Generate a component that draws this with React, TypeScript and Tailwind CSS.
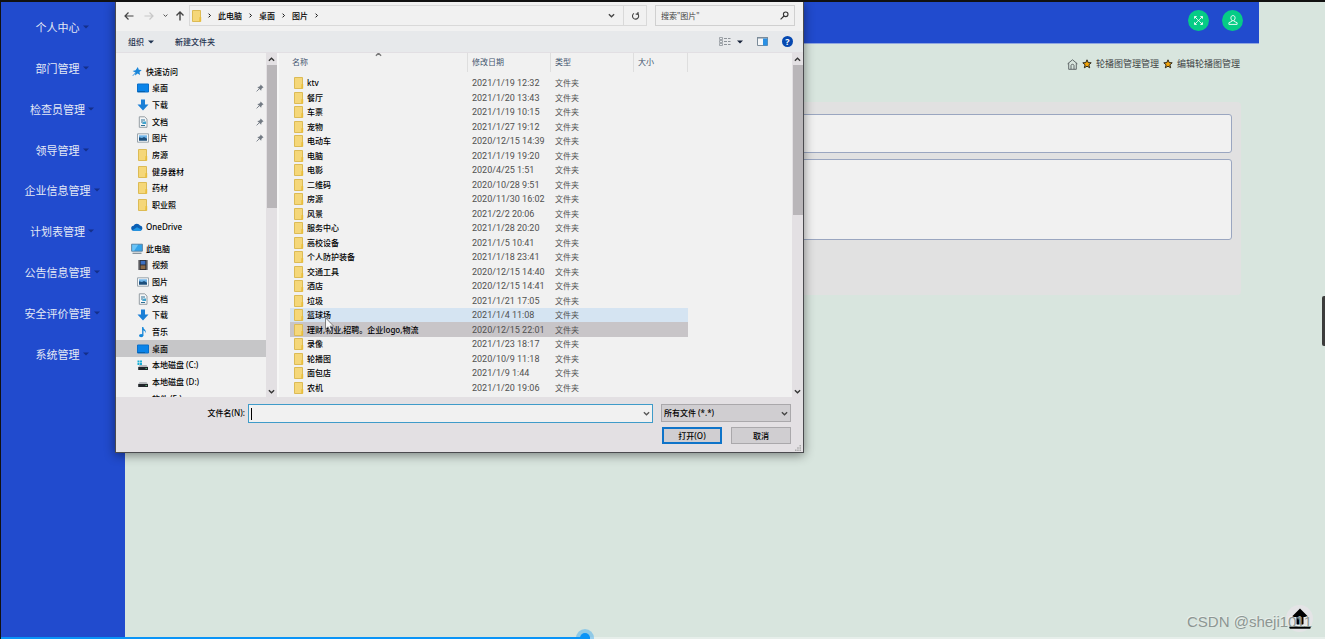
import type { ReactNode } from "react";

const menuItems = [
  "个人中心",
  "部门管理",
  "检查员管理",
  "领导管理",
  "企业信息管理",
  "计划表管理",
  "公告信息管理",
  "安全评价管理",
  "系统管理",
];

type FileRow = { name: string; date: string; state?: "hover" | "selected" };

const files: FileRow[] = [
  { name: "ktv", date: "2021/1/19 12:32" },
  { name: "餐厅", date: "2021/1/20 13:43" },
  { name: "车票", date: "2021/1/19 10:15" },
  { name: "宠物", date: "2021/1/27 19:12" },
  { name: "电动车", date: "2020/12/15 14:39" },
  { name: "电脑", date: "2021/1/19 19:20" },
  { name: "电影", date: "2020/4/25 1:51" },
  { name: "二维码", date: "2020/10/28 9:51" },
  { name: "房源", date: "2020/11/30 16:02" },
  { name: "风景", date: "2021/2/2 20:06" },
  { name: "服务中心", date: "2021/1/28 20:20" },
  { name: "高校设备", date: "2021/1/5 10:41" },
  { name: "个人防护装备", date: "2021/1/18 23:41" },
  { name: "交通工具", date: "2020/12/15 14:40" },
  { name: "酒店", date: "2020/12/15 14:41" },
  { name: "垃圾", date: "2021/1/21 17:05" },
  { name: "篮球场", date: "2021/1/4 11:08", state: "hover" },
  { name: "理财,物业,招聘。企业logo,物流", date: "2020/12/15 22:01", state: "selected" },
  { name: "录像", date: "2021/1/23 18:17" },
  { name: "轮播图", date: "2020/10/9 11:18" },
  { name: "面包店", date: "2021/1/9 1:44" },
  { name: "农机", date: "2021/1/20 19:06" },
];

const rowState = {
  hover: "bg-[#d5e4f2]",
  selected: "bg-[#c8c5c8]",
};

function FolderIcon() {
  return (
    <svg className="h-3 w-[10px] shrink-0" viewBox="0 0 10 12" aria-hidden="true">
      <path d="M.5.5h8v11h-8z" fill="#f5d779" stroke="#dcbb55" />
      <path d="M7.5 7h1.7v4.6H7.2z" fill="#e8bd3a" />
    </svg>
  );
}

function DesktopIcon() {
  return (
    <svg className="h-[10px] w-3 shrink-0" viewBox="0 0 12 10" aria-hidden="true">
      <path d="M.5 1h11v8H.5z" fill="#0a84ea" stroke="#0a6fc8" />
      <path d="M1 8.5h7" stroke="#065a9f" strokeWidth=".8" />
    </svg>
  );
}

function DownloadIcon() {
  return (
    <svg className="h-3 w-3 shrink-0" viewBox="0 0 12 12" aria-hidden="true">
      <path d="M4 .5h4v5h3.500L6 11.500.5 5.500H4z" fill="#1a7fd6" />
    </svg>
  );
}

function DocumentIcon() {
  return (
    <svg className="h-3 w-3 shrink-0" viewBox="0 0 12 12" aria-hidden="true">
      <path d="M2.3.8h5.4l2.3 2.3v8.2H2.3z" fill="#f4f6f7" stroke="#8a949b" strokeWidth=".9" />
      <path d="M4 4h4M4 6h2M4 9.5h4" stroke="#2f6f94" />
      <path d="M6.5 5.5H9V8H5z" fill="#3fa4cf" />
    </svg>
  );
}

function PictureIcon() {
  return (
    <svg className="h-[10px] w-3 shrink-0" viewBox="0 0 12 10" aria-hidden="true">
      <path d="M.5.8h11v8.4H.5z" fill="#f5f8fa" stroke="#9aa5ad" />
      <path d="M2 2.3h8v3.2H2z" fill="#6fb4e8" />
      <path d="M2 4.300l3 .6 2-.8 3 1.400v2.300H2z" fill="#1d4f7c" />
    </svg>
  );
}

function VideoIcon() {
  return (
    <svg className="h-3 w-3 shrink-0" viewBox="0 0 12 12" aria-hidden="true">
      <path d="M1.5 1h9v10h-9z" fill="#2a2a30" />
      <path d="M3.6 1.8h4.8v3.7H3.6z" fill="#3c6fc0" />
      <path d="M3.6 6.4h4.8v3.7H3.6z" fill="#8c6a46" />
      <path d="M2.5 1.5v9M9.5 1.5v9" stroke="#a7a7a7" strokeWidth=".8" strokeDasharray="1 1" />
    </svg>
  );
}

function MusicIcon() {
  return (
    <svg className="h-3 w-3 shrink-0" viewBox="0 0 12 12" aria-hidden="true">
      <path d="M5.8 1v8.3" stroke="#1486d8" strokeWidth="1.3" />
      <ellipse cx="4.2" cy="9.6" rx="2.2" ry="1.7" fill="#1486d8" />
      <path d="M5.4.8c.6 2.3 4.3 2.7 3.2 6.4-.3-1.8-1.4-2.7-3.2-3.2z" fill="#1486d8" />
    </svg>
  );
}

function DriveIcon({ system = false }: { system?: boolean }) {
  return (
    <svg className="h-3 w-3 shrink-0" viewBox="0 0 12 12" aria-hidden="true">
      {system && <path d="M.5 1.5h2v2h-2zM3 1.5h2v2H3zM.5 4h2v2h-2zM3 4h2v2H3z" fill="#18b0d6" />}
      <path d="M2.5 6h7L11 8.3H1.2z" fill="#b4b8bb" />
      <path d="M1.2 8h9.8v3H1.2z" fill="#22262a" />
      <path d="M8.5 9.5h1.4" stroke="#6be08a" strokeWidth=".8" />
    </svg>
  );
}

function StarPinIcon() {
  return (
    <svg className="h-[11px] w-[10px] shrink-0" viewBox="0 0 10 11" aria-hidden="true">
      <path d="M5.8 1l1 2.7 2.9.3-2.2 2 .6 3-2.5-1.4L3 9.6l.4-3L.6 5l3-.8z" fill="#1a86d9" />
      <path d="M3.4 7L.8 9.8" stroke="#1a86d9" strokeWidth=".9" />
    </svg>
  );
}

function CloudIcon() {
  return (
    <svg className="h-[10px] w-3 shrink-0" viewBox="0 0 12 10" aria-hidden="true">
      <path d="M2.8 8.8a2.5 2.5 0 01-.2-5A3.6 3.6 0 019 3.5a2.7 2.7 0 01.4 5.3z" fill="#0b5fb4" />
      <path d="M1.4 8.2L6 5.2l4.8 2.6c-.4.7-.9 1-1.6 1H2.8c-.6 0-1-.2-1.4-.6z" fill="#1e96e6" />
    </svg>
  );
}

function ComputerIcon() {
  return (
    <svg className="h-3 w-3 shrink-0" viewBox="0 0 12 12" aria-hidden="true">
      <path d="M.6 1.2h10.8v7H.6z" fill="#33a3ea" stroke="#5a7f9b" strokeWidth=".9" />
      <path d="M1.2 1.8h6l-4 6h-2z" fill="#6cc4f6" />
      <path d="M1.5 10.3h9" stroke="#7d8b95" strokeWidth="1.2" />
    </svg>
  );
}

function PushPin() {
  return (
    <svg className="h-2 w-2" viewBox="0 0 8 8" aria-hidden="true">
      <path d="M4.6.4l3 3-1 .3-1.200 1.300-.2 1.800L1.300 2.900l1.800-.2 1.300-1.200z" fill="#737b84" />
      <path d="M3.2 4.8L.6 7.4" stroke="#737b84" strokeWidth=".9" />
    </svg>
  );
}

function Chevron({ dir, className }: { dir: "up" | "down" | "right"; className: string }) {
  const d = { up: "M1 5.5l3-3 3 3", down: "M1 2.5l3 3 3-3", right: "M2.5 1l3 3-3 3" }[dir];
  return (
    <svg className={className} viewBox="0 0 8 8" fill="none" stroke="currentColor" strokeWidth="1.5" aria-hidden="true">
      <path d={d} />
    </svg>
  );
}

function Caret({ className }: { className: string }) {
  return (
    <svg className={className} viewBox="0 0 6 4" aria-hidden="true">
      <path d="M0 .5h6L3 3.5z" fill="currentColor" />
    </svg>
  );
}

type TreeNode = { label: string; icon: ReactNode; pinned?: boolean; active?: boolean };

const quickAccess: TreeNode[] = [
  { label: "桌面", icon: <DesktopIcon />, pinned: true },
  { label: "下载", icon: <DownloadIcon />, pinned: true },
  { label: "文档", icon: <DocumentIcon />, pinned: true },
  { label: "图片", icon: <PictureIcon />, pinned: true },
  { label: "房源", icon: <FolderIcon /> },
  { label: "健身器材", icon: <FolderIcon /> },
  { label: "药材", icon: <FolderIcon /> },
  { label: "职业照", icon: <FolderIcon /> },
];

const thisPc: TreeNode[] = [
  { label: "视频", icon: <VideoIcon /> },
  { label: "图片", icon: <PictureIcon /> },
  { label: "文档", icon: <DocumentIcon /> },
  { label: "下载", icon: <DownloadIcon /> },
  { label: "音乐", icon: <MusicIcon /> },
  { label: "桌面", icon: <DesktopIcon />, active: true },
  { label: "本地磁盘 (C:)", icon: <DriveIcon system /> },
  { label: "本地磁盘 (D:)", icon: <DriveIcon /> },
  { label: "软件 (E:)", icon: null },
];

function TreeGroup({ label, icon, nodes = [] }: { label: string; icon: ReactNode; nodes?: TreeNode[] }) {
  return (
    <section>
      <div className="flex h-[17px] items-center gap-[3px] pl-[15px]">
        <span className="flex w-3 justify-center">{icon}</span>
        {label}
      </div>
      <ul>
        {nodes.map((n) => (
          <li
            key={n.label}
            className={
              "flex h-[17px] items-center gap-[3px] pr-[2px] pl-[21px] nth-[3n+1]:h-4 " +
              (n.active ? "bg-[#c6c6c8]" : "")
            }
          >
            <span className="flex w-3 justify-center">{n.icon}</span>
            <span className="flex-1">{n.label}</span>
            {n.pinned && <PushPin />}
          </li>
        ))}
      </ul>
    </section>
  );
}

function ScrollBar({ thumb }: { thumb: string }) {
  return (
    <div className="flex w-[11px] shrink-0 flex-col items-center bg-[#e3e0e3] text-[#333]">
      <span className="flex h-3 items-center">
        <Chevron dir="up" className="h-[7px] w-[7px]" />
      </span>
      <span className={"w-[10px] bg-[#b9b6b9] " + thumb} />
      <span className="mt-auto flex h-3 items-center">
        <Chevron dir="down" className="h-[7px] w-[7px]" />
      </span>
    </div>
  );
}

function AddressRow() {
  return (
    <div className="flex h-[29px] items-center bg-[#f1f1f1] px-2 pb-[2px]">
      <div className="flex w-[65px] items-center text-[#444]">
        <button aria-label="后退" className="w-5">
          <svg className="h-[10px] w-[10px]" viewBox="0 0 10 10" fill="none" stroke="currentColor" strokeWidth="1.2">
            <path d="M9.5 5H1M4.5 1.5L1 5l3.5 3.5" />
          </svg>
        </button>
        <button aria-label="前进" className="w-4 text-[#c8c8c8]">
          <svg className="h-[10px] w-[10px]" viewBox="0 0 10 10" fill="none" stroke="currentColor" strokeWidth="1.2">
            <path d="M.5 5H9M5.5 1.5L9 5 5.5 8.5" />
          </svg>
        </button>
        <button aria-label="最近位置" className="w-[15px]">
          <Chevron dir="down" className="ml-[3px] h-[5px] w-[5px]" />
        </button>
        <button aria-label="上移">
          <svg className="h-[10px] w-[10px]" viewBox="0 0 10 10" fill="none" stroke="currentColor" strokeWidth="1.4">
            <path d="M5 9.5V1M1.5 4.5L5 1l3.5 3.5" />
          </svg>
        </button>
      </div>
      <div className="flex h-[21px] flex-1 items-center border border-[#d9d9d9] font-medium text-black">
        <nav aria-label="路径" className="flex flex-1 items-center gap-[6px] pl-[2px]">
          <FolderIcon />
          <Chevron dir="right" className="-ml-px h-[5px] w-[5px]" />
          <a href="#pc">此电脑</a>
          <Chevron dir="right" className="h-[5px] w-[5px]" />
          <a href="#desktop">桌面</a>
          <Chevron dir="right" className="h-[5px] w-[5px]" />
          <a href="#pictures">图片</a>
          <Chevron dir="right" className="h-[5px] w-[5px]" />
        </nav>
        <button aria-label="展开" className="px-2 text-[#444]">
          <Chevron dir="down" className="h-[7px] w-[7px]" />
        </button>
        <button aria-label="刷新" className="flex h-full w-[23px] items-center justify-center border-l border-[#d9d9d9] text-[#444]">
          <svg className="h-[9px] w-[9px]" viewBox="0 0 9 9" fill="none" stroke="currentColor" strokeWidth="1.1">
            <path d="M6.300 2.500A3.100 3.100 0 113 2.400" />
            <path d="M2 .9v2.200h2.300" transform="translate(9 0) scale(-1 1)" />
          </svg>
        </button>
      </div>
      <div className="ml-2 flex h-[21px] w-[140px] items-center border border-[#d0d0d0] px-[5px]">
        <input
          aria-label="搜索"
          placeholder={'搜索"图片"'}
          className="min-w-0 flex-1 bg-transparent outline-none placeholder:text-[#444]"
        />
        <svg className="h-[9px] w-[9px] text-[#333]" viewBox="0 0 9 9" fill="none" stroke="currentColor" strokeWidth="1.1" aria-hidden="true">
          <circle cx="5.7" cy="3.3" r="2.3" />
          <path d="M4 5L.6 8.4" />
        </svg>
      </div>
    </div>
  );
}

function ToolRow() {
  return (
    <div className="flex h-[22px] items-center border-b border-[#e2dfe3] bg-[#e7e9eb] pr-[10px] pl-3 text-[#1f3350]">
      <button className="flex items-center gap-1 font-medium">
        组织
        <Caret className="h-1 w-[6px]" />
      </button>
      <button className="ml-[21px] flex-1 text-left font-medium">新建文件夹</button>
      <button aria-label="更改视图" className="flex items-center gap-[6px] text-[#16223a]">
        <svg className="h-[9px] w-3" viewBox="0 0 12 9" fill="none" stroke="#8d9399">
          <path d="M.5.5h3v2h-3zM.5 3.5h3v2h-3zM.5 6.5h3v2h-3z" strokeWidth=".8" />
          <path d="M5 1.5h3M9 1.5h2.5M5 4.5h3M9 4.5h2.5M5 7.5h3M9 7.5h2.5" />
        </svg>
        <Caret className="h-1 w-[6px]" />
      </button>
      <button aria-label="预览窗格" className="ml-[14px]">
        <svg className="h-[9px] w-[11px]" viewBox="0 0 11 9">
          <path d="M.5.5h10v8H.5z" fill="#f4f6f8" stroke="#7b8b99" />
          <path d="M0 0h11v1.500H0z" fill="#7b8b99" />
          <path d="M6 1.500h4.500v7H6z" fill="#2a90e4" />
        </svg>
      </button>
      <button aria-label="帮助" className="ml-[14px] flex h-[11px] w-[11px] items-center justify-center rounded-full bg-[#0648b0] text-[9px] leading-[11px] font-bold text-white">
        ?
      </button>
    </div>
  );
}

function FileTable() {
  return (
    <div className="relative flex-1 overflow-hidden pl-[11px]">
      <Chevron dir="up" className="absolute top-[-2px] left-[96px] h-[7px] w-[7px] text-[#777]" />
      <table className="w-[398px] table-fixed border-collapse">
        <colgroup>
          <col className="w-[178px]" />
          <col className="w-[83px]" />
          <col className="w-[83px]" />
          <col />
        </colgroup>
        <thead>
          <tr className="h-[23px] text-left align-top text-[#43566f]">
            {["名称", "修改日期", "类型", "大小"].map((h, i) => (
              <th key={h} className="p-0 font-normal">
                <div className={"h-[19px] border-r border-[#dedede] leading-[18px] " + (i === 0 ? "pl-[2px]" : "pl-1")}>{h}</div>
              </th>
            ))}
          </tr>
        </thead>
        <tbody>
          {files.map((f) => (
            <tr key={f.name} className={"h-[14px] even:h-[15px] " + (f.state ? rowState[f.state] : "")}>
              <td className="p-0">
                <div className="flex h-[14px] items-center gap-[3px] pl-1 font-medium whitespace-nowrap text-black">
                  <FolderIcon />
                  {f.name}
                </div>
              </td>
              <td className="p-0 pl-1 font-[Roboto,sans-serif] text-[9px] leading-[14px] whitespace-nowrap text-[#505050]">{f.date}</td>
              <td className="p-0 pl-1 leading-[14px] text-[#505050]">文件夹</td>
              <td className="p-0" />
            </tr>
          ))}
          <tr className="h-[15px]">
            <td className="p-0 pl-1" colSpan={4}>
              <FolderIcon />
            </td>
          </tr>
        </tbody>
      </table>
    </div>
  );
}

function DialogFooter() {
  return (
    <div className="flex flex-col gap-1 bg-[#e3e0e3] pt-[7px] pr-3 pb-2 text-black">
      <div className="flex items-start">
        <label htmlFor="file-name" className="w-[129px] text-right leading-[18px] font-medium">
          文件名(N):
        </label>
        <div className="ml-[3px] flex h-[19px] flex-1 items-center border border-[#3f9bc9] bg-[#f1f1f1] pr-[2px] pl-[2px]">
          <span className="h-3 w-px bg-black" />
          <input id="file-name" className="h-full min-w-0 flex-1 bg-transparent outline-none" />
          <Chevron dir="down" className="h-[7px] w-[7px] text-[#555]" />
        </div>
        <div className="relative ml-2 w-[130px]">
          <select aria-label="文件类型" className="block h-[18px] w-full appearance-none border border-[#aaa8ab] bg-[#d0ced1] pl-[2px] font-medium">
            <option>所有文件 (*.*)</option>
          </select>
          <Chevron dir="down" className="pointer-events-none absolute top-[6px] right-[3px] h-[7px] w-[7px] text-[#444]" />
        </div>
      </div>
      <div className="flex justify-end gap-[9px]">
        <button className="h-[17px] w-[60px] border-2 border-[#0f74c9] bg-[#d0ced1] leading-3 font-medium">打开(O)</button>
        <button className="h-[17px] w-[60px] border border-[#aaa8ab] bg-[#d0ced1] leading-3 font-medium">取消</button>
      </div>
      <svg className="absolute right-[2px] bottom-[1px] h-[6px] w-[6px]" viewBox="0 0 6 6" fill="#aaa" aria-hidden="true">
        <path d="M4.5 0H6v1.5H4.5zM4.5 2.2H6v1.5H4.5zM4.5 4.4H6V6H4.5zM2.2 2.2h1.5v1.5H2.2zM2.2 4.4h1.5V6H2.2zM0 4.4h1.5V6H0z" />
      </svg>
    </div>
  );
}

function FileDialog() {
  return (
    <div
      role="dialog"
      aria-label="打开"
      className="absolute top-0 left-[114px] w-[689px] border-x border-b border-[#4a4a4e] bg-[#f1f1f1] font-['Noto_Sans','Noto_Sans_CJK_SC',sans-serif] text-[8px] leading-3 shadow-[0_2px_10px_rgba(0,0,0,0.45)]"
    >
      <AddressRow />
      <ToolRow />
      <div className="flex h-[344px] overflow-hidden">
        <div className="flex w-[150px] flex-col gap-[5px] overflow-hidden pt-[10px] font-medium whitespace-nowrap text-black">
          <TreeGroup label="快速访问" icon={<StarPinIcon />} nodes={quickAccess} />
          <TreeGroup label="OneDrive" icon={<CloudIcon />} />
          <TreeGroup label="此电脑" icon={<ComputerIcon />} nodes={thisPc} />
        </div>
        <ScrollBar thumb="h-[143px]" />
        <div className="w-[2px] bg-[#f7f7f7]" />
        <FileTable />
        <ScrollBar thumb="h-[150px]" />
      </div>
      <DialogFooter />
      <svg className="absolute top-[315px] left-[209px] h-4 w-[10px]" viewBox="0 0 10 16" aria-hidden="true">
        <path d="M.5.8v11.4l2.6-2.4 1.8 4.4 1.9-.8-1.8-4.2h3.7z" fill="#fafafa" stroke="#666" strokeWidth=".8" />
      </svg>
    </div>
  );
}

function Star() {
  return (
    <svg className="h-[10px] w-[10px]" viewBox="0 0 10 10" aria-hidden="true">
      <path d="M5 .8l1.2 2.8 3 .2-2.3 2 .8 3L5 7.2 2.3 8.8l.8-3-2.3-2 3-.2z" fill="#f2a50c" stroke="#1c1a12" strokeWidth=".9" />
    </svg>
  );
}

export default function App() {
  return (
    <div className="relative flex min-h-screen overflow-hidden border-t-2 border-l border-[#111] bg-[#d8e5de] font-['Noto_Sans','Noto_Sans_CJK_SC',sans-serif]">
      <aside className="w-[124px] shrink-0 bg-[#214bce] pt-[6px] pr-[2px]">
        <ul className="grid h-[367px] grid-rows-9">
          {menuItems.map((m) => (
            <li key={m} className="flex items-center justify-center">
              <a href="#menu" className="flex items-center gap-[3px] text-[11px] leading-4 text-[#e4e9f5]">
                {m}
                <Caret className="mb-[2px] h-1 w-[6px] text-[#142f8a]" />
              </a>
            </li>
          ))}
        </ul>
      </aside>

      <div className="mr-[66px] min-w-0 flex-1">
        <header className="flex h-[42px] items-center justify-end gap-[13px] border-b border-[#8fa6df] bg-[#214bce] pr-4 pb-[5px]">
          <button aria-label="全屏" className="flex h-[21px] w-[21px] items-center justify-center rounded-full bg-[#06cc86] text-white">
            <svg className="h-[9px] w-[9px]" viewBox="0 0 10 10" fill="none" stroke="currentColor" strokeWidth="1">
              <path d="M.6 3V.6H3M7 .6h2.4V3M9.4 7v2.4H7M3 9.4H.6V7M.8.8l3.400 3.400M9.200.8L5.800 4.200M9.200 9.200L5.800 5.800M.8 9.200l3.400-3.400M4.2 5h1.6" />
            </svg>
          </button>
          <button aria-label="用户" className="flex h-[21px] w-[21px] items-center justify-center rounded-full bg-[#06cc86] text-white">
            <svg className="h-[10px] w-[10px]" viewBox="0 0 10 10" fill="none" stroke="currentColor" strokeWidth=".9">
              <path d="M5 .6c1.4 0 2.1.9 2.1 2.3S6.200 5.800 5 5.800 2.900 4.300 2.900 2.900 3.600.6 5 .6zM3.800 5.400v1L.9 7.700v1.700h8.200V7.700L6.200 6.400v-1" />
            </svg>
          </button>
        </header>

        <nav aria-label="面包屑" className="mt-3 mr-[19px] flex h-4 items-center justify-end gap-1 text-[9px] leading-4 text-[#3c4244]">
          <a href="#home" aria-label="首页">
            <svg className="h-[11px] w-[11px]" viewBox="0 0 11 11" fill="none" stroke="#555b5e" strokeWidth=".9">
              <path d="M.6 4.800L5.500.8l4.900 4M1.700 4v6.300h7.600V4M4 10.200V6.500c0-1.600 3-1.600 3 0v3.700" />
            </svg>
          </a>
          <Star />
          <a href="#list">轮播图管理管理</a>
          <Star />
          <span>编辑轮播图管理</span>
        </nav>

        <form className="mt-[30px] mr-[18px] ml-[18px] flex h-[193px] flex-col gap-[6px] rounded-[4px] bg-[#e1e1e1] px-[9px] pt-3">
          <input aria-label="名称" className="h-[39px] rounded-[3px] border border-[#9aa6c0] bg-[#f1f1f1] px-2 text-[9px] outline-none" />
          <textarea aria-label="值" className="h-[81px] resize-none rounded-[3px] border border-[#9aa6c0] bg-[#f1f1f1] p-2 text-[9px] outline-none" />
        </form>
      </div>

      <FileDialog />

      <div className="absolute top-[294px] right-0 h-[50px] w-[3px] rounded-l-[2px] bg-[#3c3c3c]" />

      <button aria-label="返回顶部" className="absolute right-3 bottom-[7px] flex h-[27px] w-[27px] items-center justify-center rounded-full bg-[#e4e4e6] text-black">
        <svg className="h-[22px] w-[22px]" viewBox="0 0 22 22" fill="currentColor">
          <path d="M11 .5l7.500 7.500c.4.500.2 1-.4 1H14.500v6.500c0 .600-.4 1-1 1h-5c-.6 0-1-.4-1-1V9H3.900c-.6 0-.8-.500-.4-1z" />
          <path d="M1 18.500h20c.5 0 .8.500.7 1l-.2.700c-.1.300-.4.500-.7.500H1.200c-.3 0-.6-.2-.7-.500l-.2-.700c-.1-.500.2-1 .7-1z" />
        </svg>
      </button>
      <span className="pointer-events-none absolute right-[13px] bottom-[7px] font-['Liberation_Sans',sans-serif] text-[15px] leading-5 text-[#8d9692] [text-shadow:-1px_-1px_0_rgba(240,244,242,0.7)]">
        CSDN @sheji1011
      </span>

      <div className="absolute inset-x-0 bottom-0 h-[2px] bg-[#e6eeea]">
        <div className="relative h-full w-[44.5%] bg-[#0a94f7]">
          <span className="absolute -top-2 -right-1 flex h-[18px] w-[18px] items-center justify-center rounded-full bg-[#0a94f7]/35">
            <span className="h-[10px] w-[10px] rounded-full bg-[#0a94f7]" />
          </span>
        </div>
      </div>
    </div>
  );
}
